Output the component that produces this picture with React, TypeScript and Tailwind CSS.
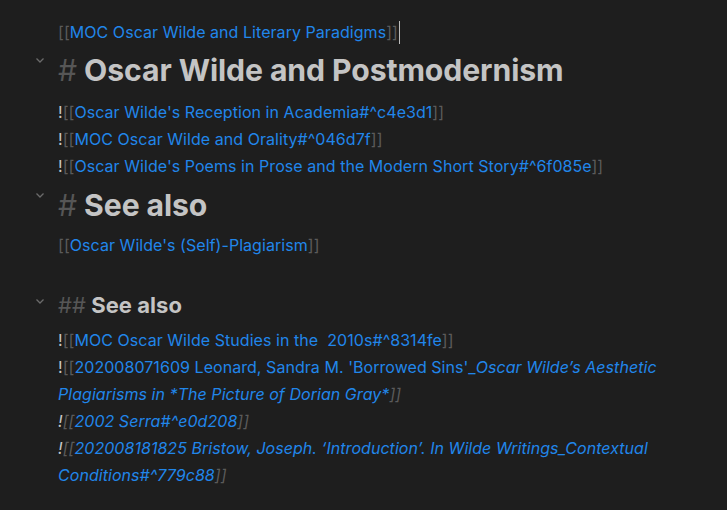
import React from "react";

const font = { fontFamily: "Inter, 'Noto Sans', sans-serif" };

function Chevron({ top }: { top: string }) {
  return (
    <svg
      width="8"
      height="5"
      viewBox="0 0 8 5"
      className={`absolute left-[-22px] ${top}`}
      fill="none"
      stroke="#6b6b6b"
      strokeWidth="1.3"
    >
      <path d="M0.5 0.5 L4 4 L7.5 0.5" />
    </svg>
  );
}

function Br({ children, italic }: { children: React.ReactNode; italic?: boolean }) {
  return <span className={`text-[#5b5b5b] ${italic ? "italic" : ""}`}>{children}</span>;
}

function L({ children, italic }: { children: React.ReactNode; italic?: boolean }) {
  return <span className={`text-[#2186ea] ${italic ? "italic" : ""}`}>{children}</span>;
}

function Bang({ italic }: { italic?: boolean }) {
  return <span className={`text-[#c8c8c8] ${italic ? "italic" : ""}`}>!</span>;
}

function Embed({ text, italic }: { text: string; italic?: boolean }) {
  return (
    <div className="h-[27px] leading-[27px]">
      <Bang italic={italic} />
      <Br italic={italic}>[[</Br>
      <L italic={italic}>{text}</L>
      <Br italic={italic}>]]</Br>
    </div>
  );
}

export default function App() {
  return (
    <div className="w-[727px] h-[510px] bg-[#1e1e1e] overflow-hidden" style={font}>
      <div className="pl-[58px] pt-[19px] text-[16px] tracking-[0.05px]">
        <div className="h-[27px] leading-[27px] flex items-center">
          <Br>[[</Br>
          <L>MOC Oscar Wilde and Literary Paradigms</L>
          <Br>]]</Br>
          <span className="inline-block w-px h-[23px] bg-[#bdbdbd] ml-[1px]" />
        </div>

        <div className="relative mt-[4px] h-[40px] leading-[40px] text-[30.2px] font-bold text-[#c4c4c4] tracking-[-0.1px]">
          <Chevron top="top-[8px]" />
          <span className="text-[#565656] font-normal">#</span> Oscar Wilde and Postmodernism
        </div>

        <div className="mt-[9px]">
          <Embed text="Oscar Wilde's Reception in Academia#^c4e3d1" />
          <Embed text="MOC Oscar Wilde and Orality#^046d7f" />
          <Embed text="Oscar Wilde's Poems in Prose and the Modern Short Story#^6f085e" />
        </div>

        <div className="relative mt-[5px] h-[40px] leading-[40px] text-[30.2px] font-bold text-[#c4c4c4] tracking-[-0.1px]">
          <Chevron top="top-[8px]" />
          <span className="text-[#565656] font-normal">#</span> See also
        </div>

        <div className="mt-[7px] h-[27px] leading-[27px]">
          <Br>[[</Br>
          <L>Oscar Wilde's (Self)-Plagiarism</L>
          <Br>]]</Br>
        </div>

        <div className="relative mt-[30px] h-[32px] leading-[32px] text-[22px] font-bold text-[#c4c4c4]">
          <Chevron top="top-[10px]" />
          <span className="text-[#565656] font-normal">##</span> See also
        </div>

        <div className="mt-[6px]">
          <Embed text={"MOC Oscar Wilde Studies in the\u00a0 2010s#^8314fe"} />
          <div className="leading-[27px]">
            <Bang />
            <Br>[[</Br>
            <L>202008071609 Leonard, Sandra M. 'Borrowed Sins'_</L>
            <L italic>Oscar Wilde’s Aesthetic</L>
            <br />
            <L italic>Plagiarisms in *The Picture of Dorian Gray*</L>
            <Br italic>]]</Br>
          </div>
          <Embed italic text="2002 Serra#^e0d208" />
          <div className="leading-[27px] italic">
            <Bang italic />
            <Br italic>[[</Br>
            <L italic>202008181825 Bristow, Joseph. ‘Introduction’. In Wilde Writings_Contextual</L>
            <br />
            <L italic>Conditions#^779c88</L>
            <Br italic>]]</Br>
          </div>
        </div>
      </div>
    </div>
  );
}
